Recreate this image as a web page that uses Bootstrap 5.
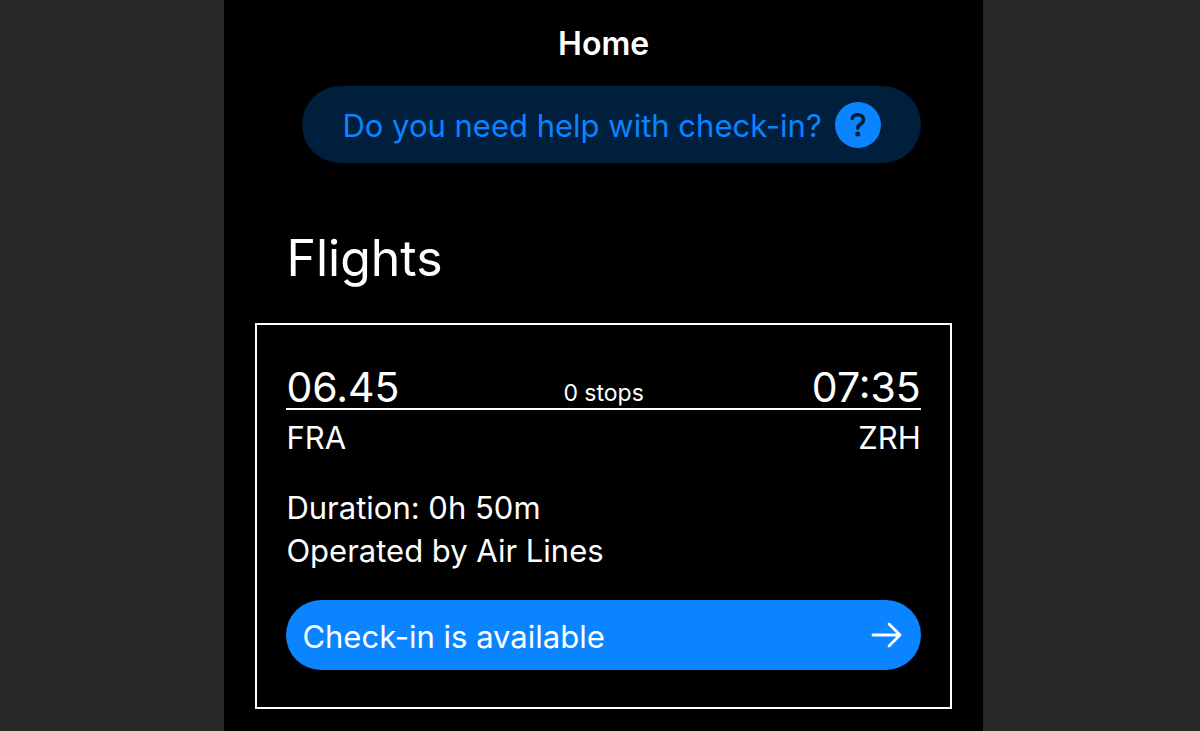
<!DOCTYPE html>
<html lang="en">
<head>
<meta charset="utf-8">
<meta name="viewport" content="width=device-width, initial-scale=1">
<title>Home</title>
<link href="https://cdn.jsdelivr.net/npm/bootstrap@5.3.0/dist/css/bootstrap.min.css" rel="stylesheet">
<style>
body{background:#282828;color:#fff;font-family:Inter,"Liberation Sans",sans-serif;font-size:31px;line-height:43px}
.screen{width:63.2%;margin-left:18.7%;background:#000;padding:24px 31px 22px}
.page-title{font-size:32px;line-height:40px;font-weight:600}
.help{background:#001f3d;color:#0a84ff;margin:22px 31px 0 47px;height:77px;padding:0 40px;border-radius:39px}
.help,.checkin{font-size:31px;line-height:43px}
.help span,.checkin span{padding-top:2px}
.section-title{font-size:50px;line-height:64px;font-weight:400;margin:63px 31px 33px}
.flight{border:2px solid #fff;padding:41px 29px 37px}
.times{border-bottom:2px solid #fff;font-size:41px;line-height:42px}
.stops{font-size:23px;line-height:30px}
.airports{padding-top:6px}
.details{margin:27px 0 28px}
.checkin{background:#0a84ff;color:#fff;height:70px;border-radius:35px;padding:0 16px}
</style>
</head>
<body>
<main class="screen min-vh-100">
<h1 class="page-title text-center m-0">Home</h1>
<div class="d-grid"><button class="help btn border-0 d-flex align-items-center justify-content-between text-nowrap" type="button"><span>Do you need help with check-in?</span>
<svg width="46" height="46" viewBox="0 0 46 46" aria-hidden="true"><circle cx="23" cy="23" r="23" fill="#0a84ff"/><path d="M17.200 16.500C17.800 14 19.800 12.800 22.800 12.800C26.200 12.800 28.500 14.700 28.500 17.600C28.500 20 27.200 21.200 25.400 22.300C23.500 23.500 22.800 24.300 22.800 26.300" fill="none" stroke="#001f3d" stroke-width="3.600" stroke-linecap="round" stroke-linejoin="round"/><circle cx="22.800" cy="32" r="2.500" fill="#001f3d"/></svg></button></div>
<h2 class="section-title">Flights</h2>
<article class="flight">
<div class="times row g-0 align-items-end"><time class="col">06.45</time><span class="stops col text-center">0 stops</span><time class="col text-end">07:35</time></div>
<div class="airports d-flex justify-content-between"><span>FRA</span><span>ZRH</span></div>
<div class="details"><div>Duration: 0h 50m</div><div>Operated by Air Lines</div></div>
<button class="checkin btn border-0 w-100 d-flex align-items-center justify-content-between" type="button"><span>Check-in is available</span>
<svg width="36" height="30" viewBox="0 0 36 30" fill="none" stroke="#fff" stroke-width="2.800" stroke-linecap="round" stroke-linejoin="round" aria-hidden="true"><path d="M4 15h27M20 4l11 11-11 11"/></svg></button>
</article>
</main>
<script src="https://cdn.jsdelivr.net/npm/bootstrap@5.3.0/dist/js/bootstrap.bundle.min.js"></script>
</body>
</html>
